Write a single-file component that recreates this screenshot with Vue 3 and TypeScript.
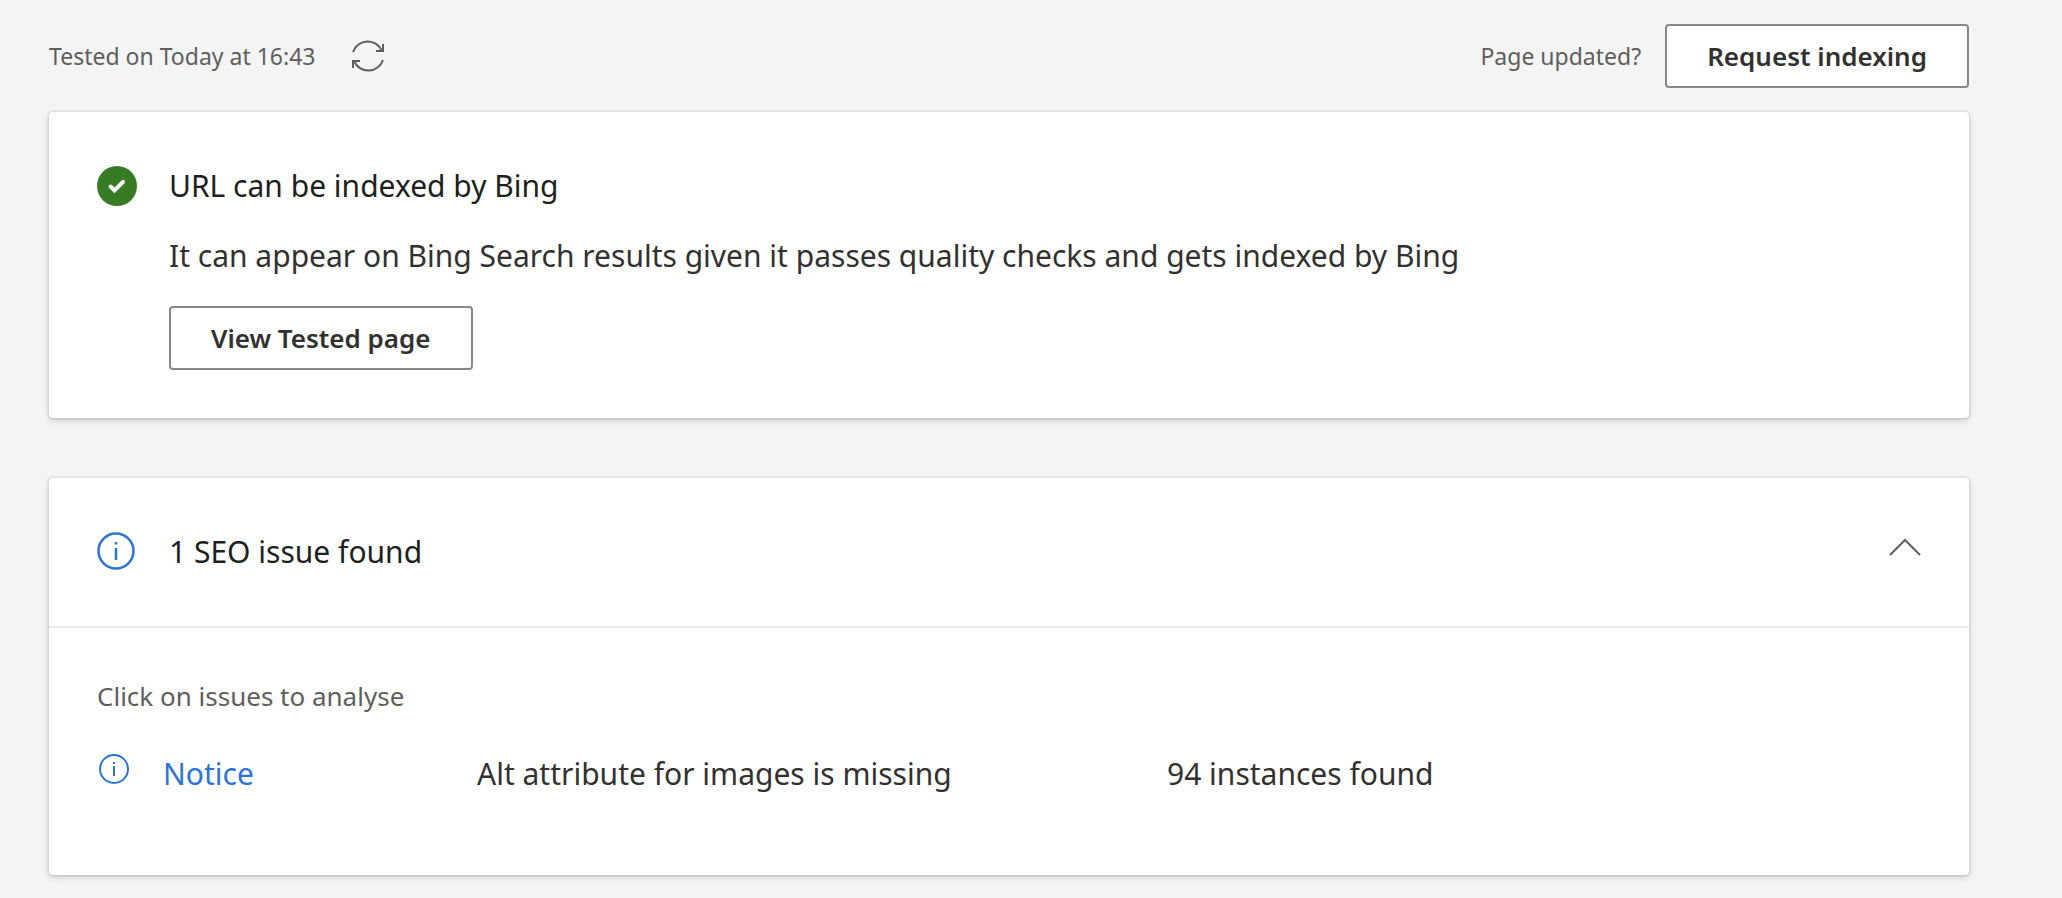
<script setup lang="ts">
import { ref } from 'vue'

interface Issue {
  severity: string
  description: string
  instances: number
}

const testedAt = ref<string>('Today at 16:43')
const expanded = ref<boolean>(true)
const issues: Issue[] = [
  { severity: 'Notice', description: 'Alt attribute for images is missing', instances: 94 },
]

function retest(): void {
  const now = new Date()
  const two = (n: number): string => String(n).padStart(2, '0')
  testedAt.value = `Today at ${two(now.getHours())}:${two(now.getMinutes())}`
}
</script>

<template>
  <main class="page">
    <div class="toolbar">
      <p class="tested">Tested on {{ testedAt }}</p>
      <button class="icon-button" type="button" aria-label="Test again" @click="retest">
        <svg class="refresh" viewBox="0 0 32 32" aria-hidden="true">
          <path d="M1 12A15.500 15.500 0 0 1 30 11M31 20A15.500 15.500 0 0 1 2 21" />
          <path d="M31 4V11H24M1 28V21H8" />
        </svg>
      </button>
      <p class="updated">Page updated?</p>
      <button class="button" type="button">Request indexing</button>
    </div>

    <section class="card verdict">
      <svg class="status" viewBox="0 0 40 40" aria-hidden="true">
        <circle cx="20" cy="20" r="20" fill="#377b24" />
        <path d="M13.500 20.500L17.500 24.500L26 15.800" class="tick" />
      </svg>
      <div class="verdict-body">
        <h2 class="heading">URL can be indexed by Bing</h2>
        <p class="detail">
          It can appear on Bing Search results given it passes quality checks and gets indexed by Bing
        </p>
        <button class="button" type="button">View Tested page</button>
      </div>
    </section>

    <section class="card">
      <header class="card-header">
        <svg class="info" viewBox="0 0 38 38" aria-hidden="true">
          <circle cx="19" cy="19" r="17.500" class="ring" />
          <path d="M19 16V28M19 10V12.500" class="mark" />
        </svg>
        <h2 class="heading">1 SEO issue found</h2>
        <button
          class="icon-button toggle"
          type="button"
          aria-label="Toggle issues"
          :aria-expanded="expanded"
          @click="expanded = !expanded"
        >
          <svg class="chevron" :class="{ closed: !expanded }" viewBox="0 0 32 18" aria-hidden="true">
            <path d="M1 17L16 2L31 17" />
          </svg>
        </button>
      </header>
      <div v-if="expanded" class="issues">
        <p class="hint">Click on issues to analyse</p>
        <table class="table">
          <tbody>
            <tr v-for="issue in issues" :key="issue.description">
              <td class="col-severity">
                <a class="severity" href="#issue">
                  <svg class="info-small" viewBox="0 0 30 30" aria-hidden="true">
                    <circle cx="15" cy="15" r="14" class="ring" />
                    <path d="M15 12V22M15 8V10" class="mark" />
                  </svg>
                  <span>{{ issue.severity }}</span>
                </a>
              </td>
              <td class="col-description">{{ issue.description }}</td>
              <td>{{ issue.instances }} instances found</td>
            </tr>
          </tbody>
        </table>
      </div>
    </section>
  </main>
</template>

<style>
html {
  background: #f4f4f4;
}
body {
  margin: 0;
}
</style>

<style scoped>
.page {
  display: flex;
  flex-direction: column;
  padding: 24px 93px 23px 49px;
  font-family: 'Noto Sans', 'Open Sans', sans-serif;
  color: #323130;
}
p,
h2 {
  margin: 0;
  font-weight: 400;
}
.toolbar {
  display: flex;
  align-items: center;
  margin-bottom: 24px;
  font-size: 23px;
  line-height: 32px;
  color: #605e5c;
}
.icon-button {
  display: flex;
  padding: 0;
  border: 0;
  background: none;
  color: #605e5c;
  cursor: pointer;
}
.toolbar .icon-button {
  margin-left: 36px;
}
.refresh {
  width: 32px;
  height: 32px;
  fill: none;
  stroke: currentColor;
  stroke-width: 2;
}
.updated {
  margin-left: auto;
  margin-right: 24px;
}
.button {
  box-sizing: border-box;
  height: 64px;
  padding: 0 40px;
  border: 2px solid #8a8886;
  border-radius: 4px;
  background: #fff;
  color: #323130;
  font-family: inherit;
  font-size: 26px;
  font-weight: 600;
  line-height: 36px;
  cursor: pointer;
}
.card {
  border-radius: 4px;
  background: #fff;
  box-shadow:
    0 0 0 2px rgba(0, 0, 0, 0.05),
    0 1px 2px rgba(0, 0, 0, 0.05),
    0 3px 7px rgba(0, 0, 0, 0.13);
}
.verdict {
  display: flex;
  gap: 32px;
  margin-bottom: 60px;
  padding: 54px 48px 48px;
}
.status {
  width: 40px;
  height: 40px;
  flex: none;
}
.tick {
  fill: none;
  stroke: #fff;
  stroke-width: 4;
  stroke-linecap: round;
}
.heading {
  font-size: 30px;
  line-height: 40px;
  color: #201f1e;
}
.detail {
  margin: 30px 0;
  font-size: 30px;
  line-height: 40px;
}
.card-header {
  display: flex;
  align-items: flex-start;
  padding: 54px 48px;
  border-bottom: 2px solid #eaeaea;
}
.info {
  width: 38px;
  height: 38px;
  margin-right: 34px;
}
.ring,
.mark {
  fill: none;
  stroke: #2e74d0;
  stroke-width: 2;
}
.info .ring,
.info .mark {
  stroke-width: 2.500;
}
.toggle {
  margin-left: auto;
  padding: 6px 0;
}
.chevron {
  width: 32px;
  height: 18px;
  fill: none;
  stroke: currentColor;
  stroke-width: 2;
}
.closed {
  transform: rotate(180deg);
}
.issues {
  padding: 50px 48px 81px;
}
.hint {
  font-size: 26px;
  line-height: 36px;
  color: #605e5c;
}
.table {
  width: 100%;
  margin-top: 40px;
  border-collapse: collapse;
  table-layout: fixed;
  font-size: 30px;
  line-height: 40px;
}
td {
  padding: 0;
}
.col-severity {
  width: 380px;
}
.col-description {
  width: 690px;
}
.severity {
  display: flex;
  align-items: flex-start;
  gap: 34px;
  color: #2e74d0;
  text-decoration: none;
}
.info-small {
  width: 30px;
  height: 30px;
  margin-left: 2px;
}
</style>
